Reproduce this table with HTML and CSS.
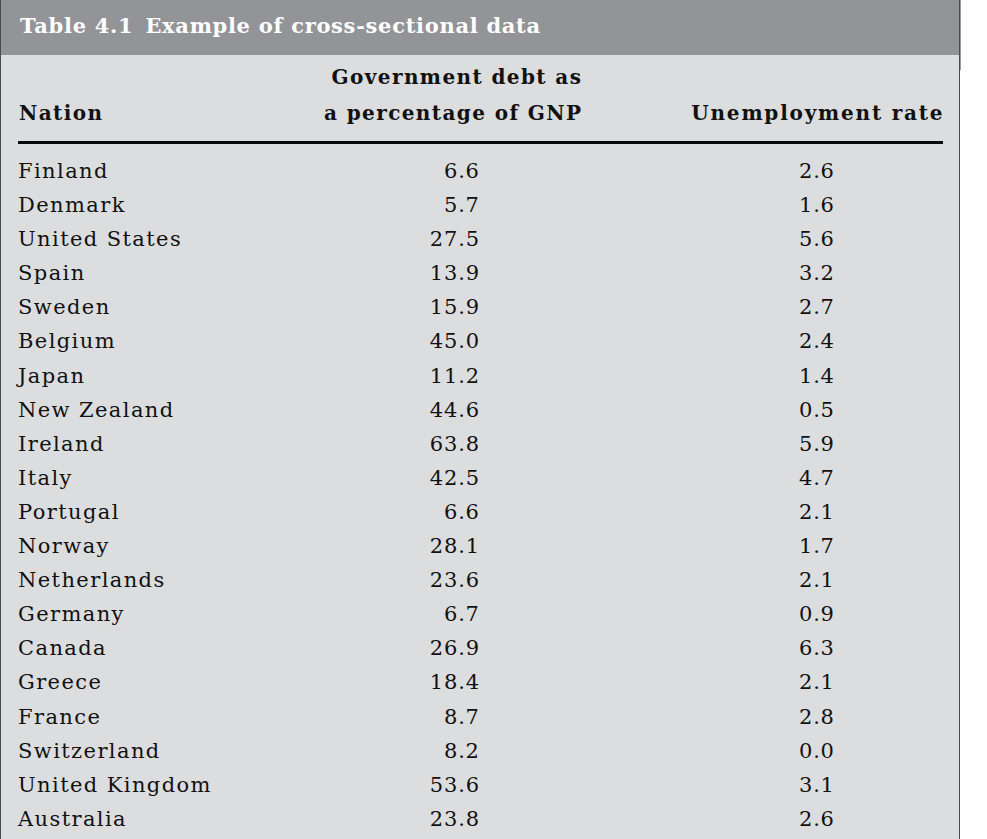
FILE: index.html
```html
<!DOCTYPE html>
<html lang="en">
<head>
<meta charset="utf-8">
<title>Table 4.1 Example of cross-sectional data</title>
<link rel="stylesheet" href="styles.css">
</head>
<body>
<div class="panel">
  <div class="caption"><span class="num">Table 4.1</span>Example of cross-sectional data</div>
  <div class="head">
    <div class="h1">Nation</div>
    <div class="h2">Government debt as<br>a percentage of GNP</div>
    <div class="h3">Unemployment rate</div>
  </div>
  <div class="rows">
    <div class="row"><span class="c1">Finland</span><span class="c2">6.6</span><span class="c3">2.6</span></div>
    <div class="row"><span class="c1">Denmark</span><span class="c2">5.7</span><span class="c3">1.6</span></div>
    <div class="row"><span class="c1">United States</span><span class="c2">27.5</span><span class="c3">5.6</span></div>
    <div class="row"><span class="c1">Spain</span><span class="c2">13.9</span><span class="c3">3.2</span></div>
    <div class="row"><span class="c1">Sweden</span><span class="c2">15.9</span><span class="c3">2.7</span></div>
    <div class="row"><span class="c1">Belgium</span><span class="c2">45.0</span><span class="c3">2.4</span></div>
    <div class="row"><span class="c1">Japan</span><span class="c2">11.2</span><span class="c3">1.4</span></div>
    <div class="row"><span class="c1">New Zealand</span><span class="c2">44.6</span><span class="c3">0.5</span></div>
    <div class="row"><span class="c1">Ireland</span><span class="c2">63.8</span><span class="c3">5.9</span></div>
    <div class="row"><span class="c1">Italy</span><span class="c2">42.5</span><span class="c3">4.7</span></div>
    <div class="row"><span class="c1">Portugal</span><span class="c2">6.6</span><span class="c3">2.1</span></div>
    <div class="row"><span class="c1">Norway</span><span class="c2">28.1</span><span class="c3">1.7</span></div>
    <div class="row"><span class="c1">Netherlands</span><span class="c2">23.6</span><span class="c3">2.1</span></div>
    <div class="row"><span class="c1">Germany</span><span class="c2">6.7</span><span class="c3">0.9</span></div>
    <div class="row"><span class="c1">Canada</span><span class="c2">26.9</span><span class="c3">6.3</span></div>
    <div class="row"><span class="c1">Greece</span><span class="c2">18.4</span><span class="c3">2.1</span></div>
    <div class="row"><span class="c1">France</span><span class="c2">8.7</span><span class="c3">2.8</span></div>
    <div class="row"><span class="c1">Switzerland</span><span class="c2">8.2</span><span class="c3">0.0</span></div>
    <div class="row"><span class="c1">United Kingdom</span><span class="c2">53.6</span><span class="c3">3.1</span></div>
    <div class="row"><span class="c1">Australia</span><span class="c2">23.8</span><span class="c3">2.6</span></div>
  </div>
</div>
</body>
</html>
```

FILE: styles.css
```css
html, body {
  margin: 0;
  padding: 0;
  background: #ffffff;
}

.panel {
  position: relative;
  width: 958px;
  min-height: 839px;
  background: #dcdddf;
  border-left: 1px solid #4a4a4a;
  border-right: 1px solid #4a4a4a;
  font-family: "DejaVu Serif", "Liberation Serif", serif;
  color: #111111;
}

.panel::after {
  content: "";
  position: absolute;
  top: 0;
  right: -2px;
  width: 1px;
  height: 70px;
  background: #9a9a9a;
}

.caption {
  height: 55px;
  background: #939497;
  color: #ffffff;
  font-weight: bold;
  font-size: 21px;
  letter-spacing: 0.7px;
  line-height: 52px;
  padding-left: 19px;
  white-space: nowrap;
}

.caption .num {
  margin-right: 12px;
}

.head {
  display: grid;
  grid-template-columns: 1fr auto 362px;
  align-items: end;
  margin: 0 16px 0 17px;
  padding-left: 1px;
  padding-bottom: 10px;
  border-bottom: 3px solid #0a0a0a;
  font-weight: bold;
  font-size: 20px;
  letter-spacing: 1.4px;
  line-height: 36px;
  white-space: nowrap;
}

.head .h2 {
  text-align: right;
  padding-top: 4px;
  margin-right: -1.4px;
}

.head .h3 {
  text-align: right;
  margin-right: -1.4px;
  letter-spacing: 1.8px;
}

.rows {
  padding: 10px 0 0 17px;
}

.row {
  display: grid;
  grid-template-columns: 283px 178px 355px;
  height: 34.1px;
  line-height: 34px;
  font-size: 21px;
}

.row .c1 {
  letter-spacing: 1.4px;
  white-space: nowrap;
}

.row .c2,
.row .c3 {
  text-align: right;
  letter-spacing: 0.8px;
  margin-right: -0.8px;
}
```
